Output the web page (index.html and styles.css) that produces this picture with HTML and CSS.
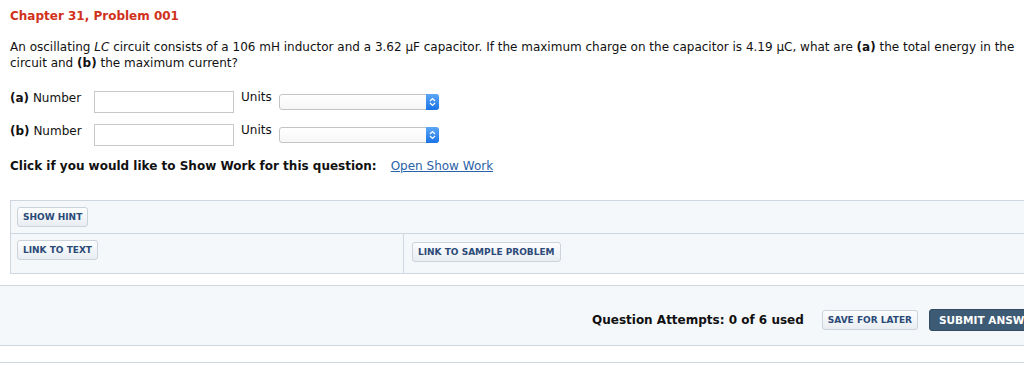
FILE: index.html
```html
<!DOCTYPE html>
<html>
<head>
<meta charset="utf-8">
<link rel="stylesheet" href="styles.css">
</head>
<body>
<div class="page">
  <h1 class="title">Chapter 31, Problem 001</h1>
  <p class="question">An oscillating <i>LC</i> circuit consists of a 106 mH inductor and a 3.62 μF capacitor. If the maximum charge on the capacitor is 4.19 μC, what are <b>(a)</b> the total energy in the circuit and <b>(b)</b> the maximum current?</p>
  <div class="answers">
    <div class="row">
      <span class="label"><b>(a)</b> Number</span>
      <span class="input"></span>
      <span class="units">Units</span>
      <span class="select"><span class="arrow"><svg width="7" height="10" viewBox="0 0 7 10"><path d="M1 4 L3.5 1.5 L6 4 M1 6 L3.5 8.5 L6 6" fill="none" stroke="#fff" stroke-width="1.2"/></svg></span></span>
    </div>
    <div class="row">
      <span class="label"><b>(b)</b> Number</span>
      <span class="input"></span>
      <span class="units">Units</span>
      <span class="select"><span class="arrow"><svg width="7" height="10" viewBox="0 0 7 10"><path d="M1 4 L3.5 1.5 L6 4 M1 6 L3.5 8.5 L6 6" fill="none" stroke="#fff" stroke-width="1.2"/></svg></span></span>
    </div>
  </div>
  <div class="showwork"><b>Click if you would like to Show Work for this question:</b><a class="link" href="#">Open Show Work</a></div>
  <div class="panel">
    <div class="prow top"><span class="btn">SHOW HINT</span></div>
    <div class="prow bottom">
      <div class="cell left"><span class="btn">LINK TO TEXT</span></div>
      <div class="cell right"><span class="btn">LINK TO SAMPLE PROBLEM</span></div>
    </div>
  </div>
</div>
<div class="footer">
  <span class="attempts">Question Attempts: 0 of 6 used</span>
  <span class="btn save">SAVE FOR LATER</span>
  <span class="btn submit">SUBMIT ANSWER</span>
</div>
<div class="endline"></div>
</body>
</html>
```
FILE: styles.css
```css
html, body { margin: 0; padding: 0; background: #fff; overflow: hidden; }
body { font-family: "DejaVu Sans", Verdana, sans-serif; font-size: 12px; color: #111; width: 1024px; }
.page { padding-left: 10px; }
.title { margin: 0; padding-top: 9px; font-size: 12px; line-height: 15px; color: #d0321c; font-weight: bold; }
.question { margin: 15px 0 0 0; line-height: 16px; width: 1014px; font-size: 12px; }
.answers { margin-top: 19px; }
.row { display: flex; align-items: flex-start; height: 33px; }
.label { width: 84px; line-height: 16px; padding-top: 0; }
.input { display: block; width: 138px; height: 20px; border: 1px solid #c9c9c9; margin-top: 1px; }
.units { margin-left: 7px; width: 38px; line-height: 16px; margin-top: -1px; }
.select { position: relative; display: block; width: 158px; height: 14px; border: 1px solid #c4c4c4; border-radius: 3px; margin-top: 4px; background: linear-gradient(#fff, #f6f6f6); }
.arrow { position: absolute; right: -1px; top: -1px; width: 13px; height: 16px; border-radius: 0 3px 3px 0; background: linear-gradient(#5ba6f6, #1b73e6); display: flex; align-items: center; justify-content: center; }
.arrow svg { display: block; }
.showwork { margin-top: 2px; line-height: 16px; }
.link { margin-left: 14px; color: #2a62a8; text-decoration: underline; }
.panel { margin-top: 26px; border: 1px solid #cfd7e1; border-right: none; background: #f5f8fb; }
.prow.top { height: 33px; border-bottom: 1px solid #cfd7e1; padding: 6px 0 0 6px; box-sizing: border-box; }
.prow.bottom { display: flex; height: 39px; }
.cell.left { width: 393px; border-right: 1px solid #cfd7e1; padding: 6px 0 0 6px; box-sizing: border-box; }
.cell.right { padding: 8px 0 0 8px; }
.btn { display: inline-block; height: 18px; line-height: 18px; padding: 0 5px; border: 1px solid #cdd3da; border-radius: 3px; background: linear-gradient(#fcfdfe, #e9edf2); font-size: 9px; font-weight: bold; color: #2b4a78; white-space: nowrap; }
.footer { margin-top: 11px; height: 59px; box-sizing: content-box; border-top: 1px solid #cfd7e1; border-bottom: 1px solid #cfd7e1; background: #f5f8fb; display: flex; align-items: center; padding-left: 592px; }
.footer > * { position: relative; top: 4px; }
.attempts { font-weight: bold; font-size: 12px; color: #111; white-space: nowrap; }
.btn.save { margin-left: 18px; }
.btn.submit { margin-left: 11px; height: 20px; line-height: 20px; background: #3e5b75; border-color: #2f4a62; color: #fff; font-size: 10.5px; padding: 0 9px; }
.endline { margin-top: 16px; border-top: 1px solid #cfd7e1; }
```
